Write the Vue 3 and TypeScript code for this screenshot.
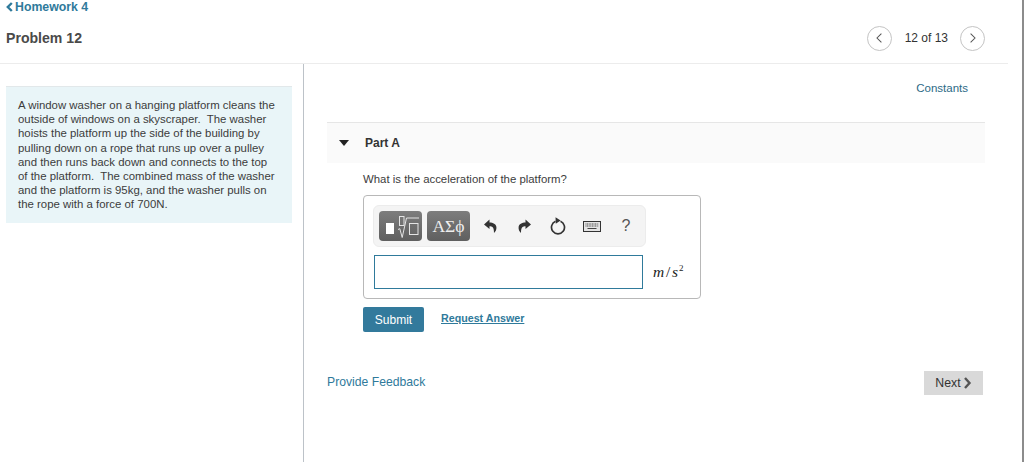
<template>
  <div class="page">
    <header class="top">
      <a class="back"><svg class="back-chev" viewBox="0 0 7 10" width="7" height="10"><path d="M5.800 1 1.800 5l4 4" fill="none" stroke="#2f7a9b" stroke-width="2.400" /></svg>Homework 4</a>
      <div class="title-row">
        <h1 class="title">Problem 12</h1>
        <nav class="pager">
          <button class="circle"><svg viewBox="0 0 10 14" width="8" height="12"><path d="M8 1.500 2.500 7 8 12.500" fill="none" stroke="#555" stroke-width="1.300" /></svg></button>
          <span class="count">12 of 13</span>
          <button class="circle"><svg viewBox="0 0 10 14" width="8" height="12"><path d="M2 1.500 7.500 7 2 12.500" fill="none" stroke="#555" stroke-width="1.300" /></svg></button>
        </nav>
      </div>
    </header>

    <div class="body">
      <aside class="side">
        <div class="intro">
          <p v-for="line in introLines" :key="line">{{ line }}</p>
        </div>
      </aside>

      <main class="main">
        <a class="constants">Constants</a>

        <section class="part-head">
          <span class="caret"></span>
          <span class="part-name">Part A</span>
        </section>

        <div class="part-body">
          <p class="question">What is the acceleration of the platform?</p>

          <div class="answer-box">
            <div class="toolbar">
              <button class="tool-dark tool-tmpl">
                <svg viewBox="0 0 43 30" width="43" height="30">
                  <rect x="7" y="12" width="8" height="11" fill="#fff" />
                  <rect x="20.500" y="5.500" width="4.500" height="9" fill="none" stroke="#e4e4e4" />
                  <path d="M19 18.500l1.800-.8 2.400 8.800 4.300-19.500H40" fill="none" stroke="#e4e4e4" />
                  <rect x="30.500" y="12.500" width="8.500" height="11" fill="none" stroke="#e4e4e4" />
                </svg>
              </button>
              <button class="tool-dark tool-greek">ΑΣϕ</button>
              <button class="tool tool-first"><svg viewBox="0 0 13 15" width="13" height="15"><path d="M5.500 .5 0 5.500l5.500 4.500V7.300c2.500 0 4.500.3 4.500 6.700 1.600-1.500 2.700-3.500 2.400-6C12.100 5 9 3.500 5.500 3.500Z" fill="#333" /></svg></button>
              <button class="tool"><svg viewBox="0 0 13 15" width="13" height="15"><path d="M7.500 .5 13 5.500 7.500 10V7.300c-2.500 0-4.500.3-4.500 6.700C1.400 12.500.3 10.500.6 8 .9 5 4 3.500 7.500 3.500Z" fill="#333" /></svg></button>
              <button class="tool"><svg viewBox="0 0 16 18" width="16" height="18"><path d="M5.500 4.300A6.500 6.500 0 1 0 10.500 4.300" fill="none" stroke="#333" stroke-width="1.700" /><path d="M5.500 .3 10.600 3.400 5.800 6.800Z" fill="#333" /></svg></button>
              <button class="tool"><svg viewBox="0 0 18 11" width="18" height="11"><rect x=".5" y=".5" width="17" height="10" fill="#e4e4e4" stroke="#333" /><path d="M2.500 3h13M2.500 5h13" stroke="#444" stroke-dasharray="1 .6" /><path d="M4.500 7.500h9" stroke="#444" /></svg></button>
              <button class="tool tool-help">?</button>
            </div>
            <div class="input-row">
              <div class="input"></div>
              <span class="unit"><i>m</i><span class="slash">/</span><i>s</i><sup>2</sup></span>
            </div>
          </div>

          <div class="actions">
            <button class="submit">Submit</button>
            <a class="request">Request Answer</a>
          </div>
        </div>

        <div class="footer-row">
          <a class="feedback">Provide Feedback</a>
          <button class="next">Next<svg viewBox="0 0 8 12" width="9" height="12"><path d="M1.500 1 6 6l-4.500 5" fill="none" stroke="#555" stroke-width="2.400" /></svg></button>
        </div>
      </main>
    </div>
  </div>
</template>

<script setup lang="ts">
const introLines: string[] = [
  'A window washer on a hanging platform cleans the',
  'outside of windows on a skyscraper.  The washer',
  'hoists the platform up the side of the building by',
  'pulling down on a rope that runs up over a pulley',
  'and then runs back down and connects to the top',
  'of the platform.  The combined mass of the washer',
  'and the platform is 95kg, and the washer pulls on',
  'the rope with a force of 700N.',
]
</script>

<style>
html, body { margin: 0; background: #fff; overflow: hidden; }
</style>

<style scoped>
.page {
  height: 462px;
  display: flex;
  flex-direction: column;
  font-family: "Liberation Sans", Arial, sans-serif;
  color: #333;
  border-right: 2px solid #8c8c8c;
  box-sizing: border-box;
  width: 1024px;
}
button { font-family: inherit; border: 0; padding: 0; background: none; }
p { margin: 0; }

.top {
  width: 1008px;
  height: 64px;
  box-sizing: border-box;
  border-bottom: 1px solid #ececec;
  padding-left: 6px;
}
.back {
  display: flex;
  align-items: center;
  gap: 2px;
  height: 14px;
  font-size: 12.300px;
  font-weight: 700;
  color: #2f7a9b;
}
.title-row {
  display: flex;
  align-items: center;
  justify-content: space-between;
  margin-top: 11px;
  height: 26px;
  padding-right: 23px;
}
.title { margin: 0; font-size: 14.100px; font-weight: 700; color: #4a4a4a; }
.pager { display: flex; align-items: center; gap: 12px; }
.circle {
  width: 25px;
  height: 25px;
  border: 1px solid #c4c4c4;
  border-radius: 50%;
  display: flex;
  align-items: center;
  justify-content: center;
  box-sizing: border-box;
}
.count { font-size: 12px; color: #333; margin-left: 1px; }

.body { flex: 1; display: flex; min-height: 0; }
.side {
  width: 304px;
  box-sizing: border-box;
  border-right: 1px solid #bcc2c8;
  padding: 22px 11px 0 6px;
}
.intro {
  background: #e9f5f8;
  border-top: 1px solid #e2e8ea;
  padding: 11px 12px;
  height: 137px;
  box-sizing: border-box;
  font-size: 11.420px;
  line-height: 14.200px;
  color: #3c3c3c;
  white-space: pre;
}

.main { flex: 1; padding: 0 37px 0 23px; min-width: 0; }
.constants {
  display: block;
  text-align: right;
  margin-top: 17px;
  height: 14px;
  line-height: 14px;
  padding-right: 17px;
  font-size: 11.500px;
  color: #2c6a86;
}
.part-head {
  margin-top: 27px;
  height: 41px;
  box-sizing: border-box;
  background: #fafafa;
  border-top: 1px solid #e6e6e6;
  display: flex;
  align-items: center;
  padding-left: 12px;
}
.caret {
  width: 0;
  height: 0;
  border-left: 5px solid transparent;
  border-right: 5px solid transparent;
  border-top: 6px solid #222;
}
.part-name { margin-left: 16px; font-size: 12px; font-weight: 700; color: #333; }

.part-body { padding-left: 36px; }
.question { margin-top: 9px; height: 14px; line-height: 14px; font-size: 11.400px; color: #3c3c3c; }
.answer-box {
  margin-top: 9px;
  width: 338px;
  height: 104px;
  box-sizing: border-box;
  border: 1px solid #b8b8b8;
  border-radius: 4px;
  padding: 9px 10px;
}
.toolbar {
  width: 273px;
  height: 42px;
  margin-left: -1px;
  box-sizing: border-box;
  background: #f4f4f4;
  border: 1px solid #ececec;
  border-radius: 6px;
  display: flex;
  align-items: center;
  padding-left: 5px;
}
.tool-dark {
  height: 30px;
  width: 43px;
  flex: none;
  border-radius: 4px;
  background: linear-gradient(#7d7d7d, #5f5f5f);
  color: #eee;
  display: flex;
  align-items: center;
  justify-content: center;
}
.tool-tmpl { margin-right: 5px; }
.tool-greek { font-family: "Liberation Serif", serif; font-size: 17.500px; }
.tool { width: 34px; height: 30px; flex: none; display: flex; align-items: center; justify-content: center; color: #444; }
.tool-first { margin-left: 3px; }
.tool-help { font-size: 16px; color: #555; }

.input-row { display: flex; align-items: center; margin-top: 8px; }
.input {
  width: 269px;
  height: 34px;
  box-sizing: border-box;
  border: 1px solid #2f7a9b;
  background: #fff;
}
.unit {
  margin-left: 10px;
  font-family: "Liberation Serif", serif;
  font-size: 15.500px;
  color: #222;
  letter-spacing: .8px;
}
.slash { margin: 0 1px; }
.unit sup { font-size: 9px; line-height: 0; }

.actions { display: flex; align-items: center; margin-top: 8px; }
.submit {
  width: 61px;
  height: 25px;
  background: #337a9c;
  color: #fff;
  border-radius: 2px;
  font-size: 12px;
}
.request {
  margin-left: 17px;
  margin-top: -3px;
  font-size: 10.700px;
  font-weight: 700;
  color: #2f7a9b;
  text-decoration: underline;
}

.footer-row {
  display: flex;
  align-items: center;
  justify-content: space-between;
  margin-top: 39px;
  height: 24px;
}
.feedback { font-size: 12.200px; color: #2f7a9b; margin-top: -3px; }
.next {
  width: 59px;
  height: 24px;
  background: #d9d9d9;
  font-size: 12.300px;
  color: #333;
  display: flex;
  align-items: center;
  justify-content: center;
  gap: 2px;
  margin-right: 2px;
}
</style>
